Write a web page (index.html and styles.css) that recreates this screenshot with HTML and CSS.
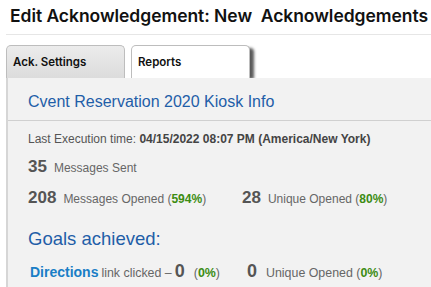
FILE: index.html
```html
<!DOCTYPE html>
<html>
<head>
<meta charset="utf-8">
<link rel="stylesheet" href="styles.css">
</head>
<body>
<div class="page">
  <h1 class="title">Edit Acknowledgement: New&nbsp; Acknowledgements</h1>
  <div class="tabs">
    <div class="tab">Ack. Settings</div>
    <div class="tab active">Reports</div>
  </div>
  <div class="panel">
    <div class="panel-head">Cvent Reservation 2020 Kiosk Info</div>
    <div class="panel-body">
      <div class="exec">Last Execution time: <b>04/15/2022 08:07 PM (America/New York)</b></div>
      <div class="row r1"><span class="stat"><span class="num">35</span><span class="lbl">Messages Sent</span></span></div>
      <div class="row r2">
        <span class="stat w1"><span class="num">208</span><span class="lbl">Messages Opened (<b class="pct">594%</b>)</span></span>
        <span class="stat"><span class="num">28</span><span class="lbl">Unique Opened (<b class="pct">80%</b>)</span></span>
      </div>
      <div class="goals">Goals achieved:</div>
      <div class="row r3">
        <span class="stat w2"><a class="link">Directions</a><span class="lbl lk">link clicked –</span><span class="num big">0</span><span class="lbl l3">(<b class="pct">0%</b>)</span></span>
        <span class="stat"><span class="num big">0</span><span class="lbl l3">Unique Opened (<b class="pct">0%</b>)</span></span>
      </div>
    </div>
  </div>
</div>
</body>
</html>
```
FILE: styles.css
```css
html, body { margin: 0; padding: 0; background: #fff; overflow: hidden; }
.page { padding-left: 6px; font-family: "Liberation Sans", Arial, sans-serif; }
.title {
  margin: 0;
  padding: 5px 0 8px 4px;
  font-family: Inter, "Open Sans", sans-serif;
  font-weight: 600;
  font-size: 17.5px;
  line-height: 21px;
  color: #111;
  border-bottom: 1px solid #e6e6e6;
  white-space: nowrap;
  letter-spacing: -0.05px;
}
.tabs { display: flex; gap: 6px; margin-top: 10px; height: 33px; }
.tab {
  width: 119px;
  box-sizing: border-box;
  border: 1px solid #bdbdbd;
  border-bottom: none;
  border-radius: 5px 5px 0 0;
  background: linear-gradient(#ececec, #dcdcdc);
  font-family: Inter, "Open Sans", sans-serif;
  font-weight: 600;
  font-size: 11.5px;
  color: #111;
  padding: 9px 0 0 6px;
}
.tab.active { background: #fff; box-shadow: 5px 2px 3px -1px rgba(0,0,0,0.65); position: relative; z-index: 0; }
.panel { background: #f2f2f2; border-left: 2px solid #d6d6d6; position: relative; z-index: 1; height: 220px; }
.panel-head {
  padding: 15px 0 0 20px;
  height: 27px;
  font-size: 16px;
  color: #1f5ea8;
  border-bottom: 1px solid #d0d0d0;
}
.panel-body { padding-left: 20px; color: #555; }
.exec { font-size: 12px; margin-top: 11px; line-height: 14px; }
.exec b { color: #444; }
.row { display: flex; align-items: baseline; }
.r1 { margin-top: 11px; }
.r2 { margin-top: 11px; }
.stat { display: flex; align-items: baseline; }
.w1 { width: 214px; }
.w2 { width: 219px; }
.num { font-weight: bold; font-size: 17px; color: #555; margin-right: 7px; }
.lbl { font-size: 12px; color: #666; }
.l3 { font-size: 12.4px; }
.pct { color: #3c8c12; }
.goals { font-size: 18.5px; color: #1f5ea8; margin-top: 20px; line-height: 22px; }
.r3 { margin-top: 11px; }
.link { font-weight: bold; color: #1a7ec6; font-size: 14px; margin-left: 2px; margin-right: 3px; }
.lbl.lk { font-size: 12.4px; margin-right: 3px; }
.num.big { font-size: 18px; margin-right: 9px; }
```
